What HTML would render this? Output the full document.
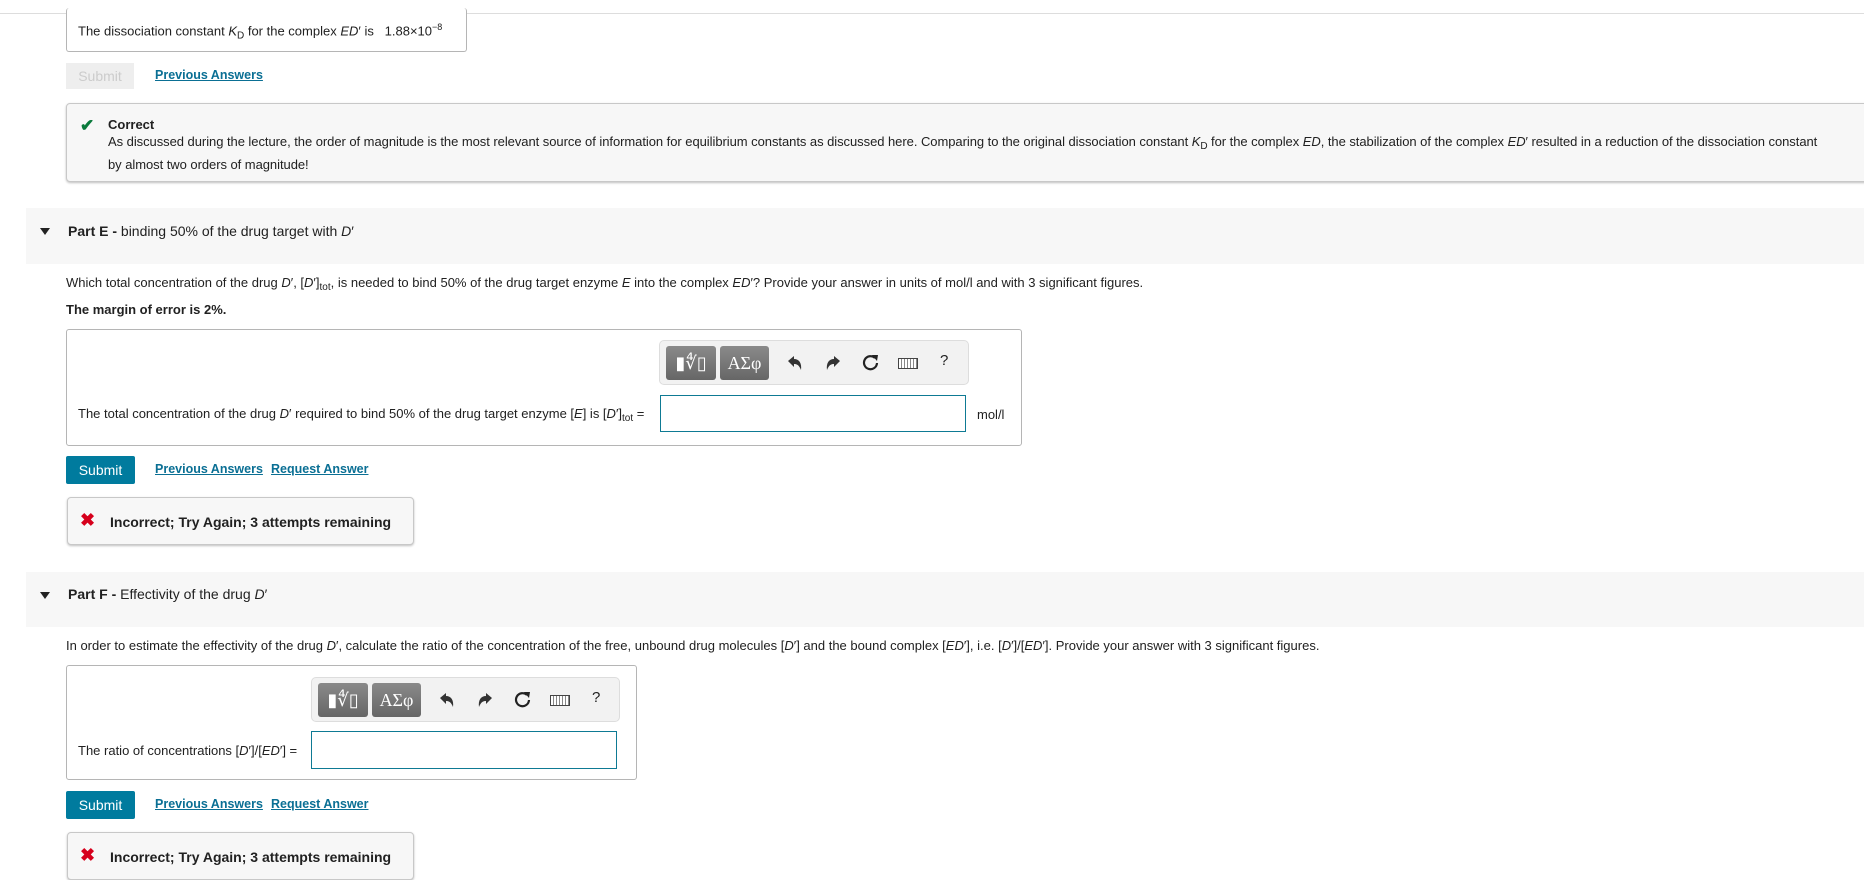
<!DOCTYPE html>
<html><head><meta charset="utf-8"><style>
*{box-sizing:border-box;margin:0;padding:0}
body{width:1864px;height:877px;overflow:hidden;background:#fff;font-family:"Liberation Sans",Arial,sans-serif;font-size:13px;color:#212121;position:relative}
.a{position:absolute;white-space:nowrap}
.box{position:absolute;border:1px solid #b5b5b5;border-radius:3px;background:#fff}
.fb{position:absolute;border:1px solid #c8c8c8;border-radius:4px;background:#f7f7f7;box-shadow:0 1px 2px rgba(0,0,0,.25)}
.lnk{color:#0a6f94;font-weight:bold;text-decoration:underline;font-size:12.5px}
.btn{position:absolute;background:#007b9e;color:#fff;border-radius:2px;font-size:14px;text-align:center;line-height:28px}
.band{position:absolute;left:26px;right:0;background:#f7f7f7}
.tri{position:absolute;width:0;height:0;border-left:5px solid transparent;border-right:5px solid transparent;border-top:7px solid #222}
.tb{position:absolute;background:#f2f2f2;border:1px solid #ddd;border-radius:5px}
.tbb{position:absolute;height:34px;background:linear-gradient(#8a8a8a,#666);border-radius:3px;color:#fff;font-family:"Liberation Serif",serif;font-size:18px;line-height:34px;text-align:center}
.inp{position:absolute;border:1px solid #0e7a94;background:#fff}
i{font-style:italic}
sub{font-size:10px;vertical-align:-3px}
.x{color:#d6001c;font-weight:bold;font-size:18px}
svg{position:absolute}
</style></head><body>
<div class="a" style="left:0;top:13px;height:1px;background:#ddd;width:1864px"></div>

<div class="box" style="left:66px;top:8px;width:401px;height:44px;border-top:none"></div>
<div class="a" style="left:78px;top:22px">The dissociation constant <i>K</i><sub>D</sub> for the complex <i>ED</i>′ is &nbsp;&nbsp;1.88×10<sup style="font-size:9px">−8</sup></div>

<div class="a" style="left:66px;top:63px;width:68px;height:26px;background:#eee;color:#ccc;font-size:14px;text-align:center;line-height:26px">Submit</div>
<div class="a lnk" style="left:155px;top:68px">Previous Answers</div>

<div class="fb" style="left:66px;top:103px;width:1820px;height:79px"></div>
<div class="a" style="left:80px;top:116px;color:#0a7a3c;font-size:17px;font-weight:bold">✔</div>
<div class="a" style="left:108px;top:117px;font-weight:bold">Correct</div>
<div class="a" style="left:108px;top:133px;line-height:18px;letter-spacing:-0.05px">As discussed during the lecture, the order of magnitude is the most relevant source of information for equilibrium constants as discussed here. Comparing to the original dissociation constant <i>K</i><sub>D</sub> for the complex <i>ED</i>, the stabilization of the complex <i>ED</i>′ resulted in a reduction of the dissociation constant<br>by almost two orders of magnitude!</div>

<div class="band" style="top:208px;height:56px"></div>
<div class="tri" style="left:40px;top:228px"></div>
<div class="a" style="left:68px;top:223px;font-size:14px"><b>Part E - </b>binding 50% of the drug target with <i>D</i>′</div>

<div class="a" style="left:66px;top:275px">Which total concentration of the drug <i>D</i>′, [<i>D</i>′]<sub>tot</sub>, is needed to bind 50% of the drug target enzyme <i>E</i> into the complex <i>ED</i>′? Provide your answer in units of mol/l and with 3 significant figures.</div>
<div class="a" style="left:66px;top:302px;font-weight:bold">The margin of error is 2%.</div>

<div class="box" style="left:66px;top:329px;width:956px;height:117px"></div>
<div class="tb" style="left:659px;top:340px;width:310px;height:45px"></div>
<div class="tbb" style="left:666px;top:346px;width:50px">▮∜▯</div>
<div class="tbb" style="left:720px;top:346px;width:49px">ΑΣφ</div>
<svg style="left:786px;top:354px" width="18" height="18" viewBox="0 0 18 18"><path d="M2 7 L8 2 L8 5 C13 5 16 9 15 16 C13 11 11 10 8 10 L8 13 Z" fill="#333"/></svg>
<svg style="left:824px;top:354px" width="18" height="18" viewBox="0 0 18 18"><path d="M16 7 L10 2 L10 5 C5 5 2 9 3 16 C5 11 7 10 10 10 L10 13 Z" fill="#333"/></svg>
<svg style="left:861px;top:353px" width="19" height="19" viewBox="0 0 19 19"><path d="M14 5 A6.5 6.5 0 1 0 16 10" fill="none" stroke="#222" stroke-width="2.2"/><path d="M11 2 L17 2 L16 8 Z" fill="#222"/></svg>
<div class="a" style="left:898px;top:358px;width:20px;height:11px;border:1px solid #444;background:repeating-linear-gradient(90deg,#fff 0 2px,#888 2px 3px)"></div>
<div class="a" style="left:940px;top:352px;font-size:15px">?</div>
<div class="a" style="left:78px;top:406px">The total concentration of the drug <i>D</i>′ required to bind 50% of the drug target enzyme [<i>E</i>] is [<i>D</i>′]<sub>tot</sub> =</div>
<div class="inp" style="left:660px;top:395px;width:306px;height:37px"></div>
<div class="a" style="left:977px;top:407px">mol/l</div>

<div class="btn" style="left:66px;top:456px;width:69px;height:28px">Submit</div>
<div class="a lnk" style="left:155px;top:462px">Previous Answers</div>
<div class="a lnk" style="left:271px;top:462px">Request Answer</div>

<div class="fb" style="left:67px;top:497px;width:347px;height:48px"></div>
<div class="a x" style="left:80px;top:510px">✖</div>
<div class="a" style="left:110px;top:514px;font-weight:bold;font-size:14px">Incorrect; Try Again; 3 attempts remaining</div>

<div class="band" style="top:572px;height:55px"></div>
<div class="tri" style="left:40px;top:592px"></div>
<div class="a" style="left:68px;top:586px;font-size:14px"><b>Part F - </b>Effectivity of the drug <i>D</i>′</div>

<div class="a" style="left:66px;top:638px">In order to estimate the effectivity of the drug <i>D</i>′, calculate the ratio of the concentration of the free, unbound drug molecules [<i>D</i>′] and the bound complex [<i>ED</i>′], i.e. [<i>D</i>′]/[<i>ED</i>′]. Provide your answer with 3 significant figures.</div>

<div class="box" style="left:66px;top:665px;width:571px;height:115px"></div>
<div class="tb" style="left:311px;top:677px;width:309px;height:45px"></div>
<div class="tbb" style="left:318px;top:683px;width:50px">▮∜▯</div>
<div class="tbb" style="left:372px;top:683px;width:49px">ΑΣφ</div>
<svg style="left:438px;top:691px" width="18" height="18" viewBox="0 0 18 18"><path d="M2 7 L8 2 L8 5 C13 5 16 9 15 16 C13 11 11 10 8 10 L8 13 Z" fill="#333"/></svg>
<svg style="left:476px;top:691px" width="18" height="18" viewBox="0 0 18 18"><path d="M16 7 L10 2 L10 5 C5 5 2 9 3 16 C5 11 7 10 10 10 L10 13 Z" fill="#333"/></svg>
<svg style="left:513px;top:690px" width="19" height="19" viewBox="0 0 19 19"><path d="M14 5 A6.5 6.5 0 1 0 16 10" fill="none" stroke="#222" stroke-width="2.2"/><path d="M11 2 L17 2 L16 8 Z" fill="#222"/></svg>
<div class="a" style="left:550px;top:695px;width:20px;height:11px;border:1px solid #444;background:repeating-linear-gradient(90deg,#fff 0 2px,#888 2px 3px)"></div>
<div class="a" style="left:592px;top:689px;font-size:15px">?</div>
<div class="a" style="left:78px;top:743px">The ratio of concentrations [<i>D</i>′]/[<i>ED</i>′] =</div>
<div class="inp" style="left:311px;top:731px;width:306px;height:38px"></div>

<div class="btn" style="left:66px;top:791px;width:69px;height:28px">Submit</div>
<div class="a lnk" style="left:155px;top:797px">Previous Answers</div>
<div class="a lnk" style="left:271px;top:797px">Request Answer</div>

<div class="fb" style="left:67px;top:832px;width:347px;height:48px"></div>
<div class="a x" style="left:80px;top:845px">✖</div>
<div class="a" style="left:110px;top:849px;font-weight:bold;font-size:14px">Incorrect; Try Again; 3 attempts remaining</div>
</body></html>
